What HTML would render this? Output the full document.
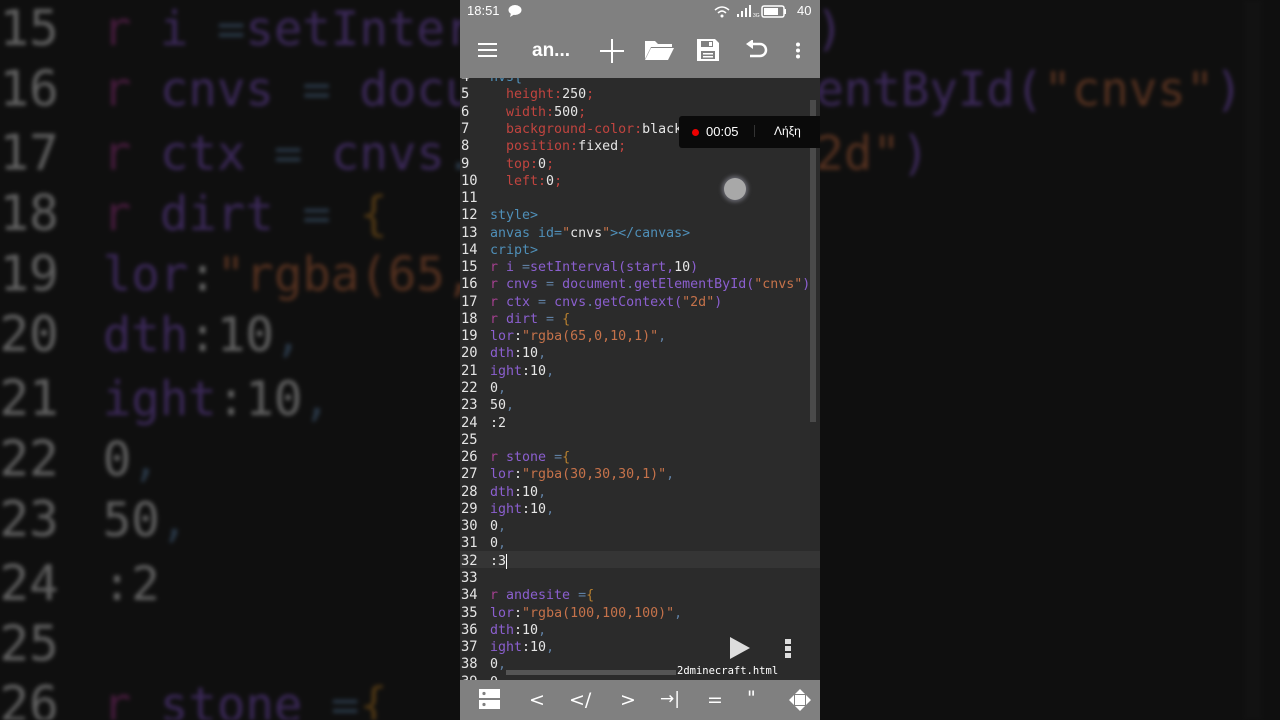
<!DOCTYPE html>
<html><head><meta charset="utf-8"><style>
*{margin:0;padding:0;box-sizing:border-box}
body{width:1280px;height:720px;overflow:hidden;background:#0f0f0f;position:relative;font-family:"Liberation Sans",sans-serif}
.code{position:absolute;left:460px;top:0;width:360px;height:720px;font-family:"DejaVu Sans Mono","Liberation Mono",monospace;font-size:13.3px;}
#fg{height:680px;overflow:hidden}
.ln{position:absolute;left:1px;height:17.27px;line-height:17.27px;white-space:pre;color:#e4e4e4;font-size:13.8px}
.ln b{font-weight:normal;position:absolute;left:29px;white-space:pre;font-size:13.3px}
.p{color:#c0443f}.n{color:#e6e6e6}.k{color:#a3408e}.i{color:#8b5fcf}.t{color:#4f8fb8}.s{color:#c5724a}.c{color:#5f7fa2}.o{color:#b8802f}
#bg{position:absolute;left:0;top:0;width:1280px;height:720px;overflow:hidden;filter:blur(2px) brightness(0.42)}
#bg .code{transform-origin:0 0;transform:translate(-464px,-920px) scale(3.56);left:460px}
.phone{position:absolute;left:460px;top:0;width:360px;height:720px;background:#2b2b2b;overflow:hidden}
</style></head><body>
<div id="bg"><div class="code" id="bgc"></div><div style="position:absolute;left:1244px;top:0;width:18px;height:720px;background:#2a2a2a"></div></div>
<div class="phone">
<div style="position:absolute;left:0;top:551px;width:360px;height:17px;background:#353535"></div>
</div>
<div class="code" id="fg"></div>
<!-- top bars -->
<div style="position:absolute;left:460px;top:0;width:360px;height:78px;background:#808080"></div>
<div style="position:absolute;left:467px;top:3px;color:#fff;font-size:13px">18:51</div>
<svg style="position:absolute;left:508px;top:4px" width="14" height="13"><ellipse cx="7" cy="6" rx="6.5" ry="5" fill="#fff"/><path d="M3 9 L2 13 L7 10Z" fill="#fff"/></svg>
<svg style="position:absolute;left:713px;top:4px" width="80" height="14">
<path d="M2 6 Q9 0 16 6" stroke="#fff" stroke-width="1.5" fill="none"/><path d="M5 9 Q9 5 13 9" stroke="#fff" stroke-width="1.5" fill="none"/><circle cx="9" cy="12" r="1.5" fill="#fff"/>
<rect x="24" y="10" width="2" height="3" fill="#fff"/><rect x="28" y="7" width="2" height="6" fill="#fff"/><rect x="32" y="4" width="2" height="9" fill="#fff"/><rect x="36" y="1" width="2" height="12" fill="#fff"/>
<text x="40" y="13" font-size="5" fill="#fff">3G</text>
<rect x="49" y="2" width="22" height="11" rx="2" stroke="#fff" stroke-width="1.5" fill="none"/><rect x="51" y="4" width="14" height="7" fill="#fff"/><rect x="71" y="5" width="2" height="5" fill="#fff"/>
</svg>
<div style="position:absolute;left:797px;top:3px;color:#fff;font-size:13px">40</div>
<svg style="position:absolute;left:478px;top:42px" width="20" height="16"><rect y="1" width="19" height="2" fill="#fff"/><rect y="7" width="19" height="2" fill="#fff"/><rect y="13" width="19" height="2" fill="#fff"/></svg>
<div style="position:absolute;left:532px;top:40px;color:#fff;font-size:19px;font-weight:bold">an...</div>
<svg style="position:absolute;left:599px;top:38px" width="26" height="26"><path d="M13 1V25M1 13H25" stroke="#fff" stroke-width="2"/></svg>
<svg style="position:absolute;left:645px;top:39px" width="30" height="22"><path d="M0 2H10L13 5H27V8H6L0 20Z" fill="#fff"/><path d="M6 9H29L23 21H0Z" fill="#fff"/></svg>
<svg style="position:absolute;left:696px;top:38px" width="24" height="24"><path d="M1 1H19L23 5V23H1Z" fill="#fff"/><rect x="5" y="3" width="12" height="6" fill="#808080"/><rect x="13" y="4" width="3" height="4" fill="#fff"/><rect x="5" y="13" width="14" height="8" fill="#808080"/><rect x="7" y="15" width="10" height="1.5" fill="#fff"/><rect x="7" y="18" width="10" height="1.5" fill="#fff"/></svg>
<svg style="position:absolute;left:745px;top:40px" width="24" height="22"><path d="M7 4H15A6 6 0 0 1 15 16H5" stroke="#fff" stroke-width="2.5" fill="none"/><path d="M1 4L8 -1V9Z" fill="#fff"/></svg>
<svg style="position:absolute;left:794px;top:42px" width="8" height="18"><circle cx="4" cy="2.5" r="2" fill="#fff"/><circle cx="4" cy="8.5" r="2" fill="#fff"/><circle cx="4" cy="14.5" r="2" fill="#fff"/></svg>
<!-- scrollbars -->
<div style="position:absolute;left:810px;top:100px;width:6px;height:322px;background:#4a4a4a"></div>
<div style="position:absolute;left:506px;top:670px;width:170px;height:5px;background:#555"></div>
<!-- recording overlay -->
<div style="position:absolute;left:679px;top:116px;width:141px;height:32px;background:#0a0a0a;border-radius:3px 0 0 3px"></div>
<div style="position:absolute;left:692px;top:129px;width:7px;height:7px;border-radius:50%;background:#e00"></div>
<div style="position:absolute;left:706px;top:124px;color:#fff;font-size:13px">00:05</div>
<div style="position:absolute;left:754px;top:125px;width:1px;height:12px;background:#333"></div>
<div style="position:absolute;left:774px;top:124px;color:#fff;font-size:12px">Λήξη</div>
<div style="position:absolute;left:724px;top:178px;width:22px;height:22px;border-radius:50%;background:#a8a8a8;box-shadow:0 0 4px 2px rgba(200,200,220,.4)"></div>
<!-- play etc -->
<svg style="position:absolute;left:730px;top:637px" width="20" height="22"><path d="M0 0L20 11L0 22Z" fill="#ddd"/></svg>
<svg style="position:absolute;left:784px;top:638px" width="10" height="22"><rect x="1" y="1" width="6" height="5" fill="#ddd"/><rect x="1" y="8" width="6" height="5" fill="#ddd"/><rect x="1" y="15" width="6" height="5" fill="#ddd"/></svg>
<div style="position:absolute;left:677px;top:665px;color:#fff;font-family:'DejaVu Sans Mono',monospace;font-size:10.5px">2dminecraft.html</div>
<!-- bottom bar -->
<div style="position:absolute;left:460px;top:680px;width:360px;height:40px;background:#808080"></div>
<svg style="position:absolute;left:479px;top:689px" width="22" height="22"><rect y="0" width="21" height="9" fill="#fff"/><rect y="11" width="21" height="9" fill="#fff"/><circle cx="5" cy="4.5" r="1.6" fill="#808080"/><circle cx="5" cy="15.5" r="1.6" fill="#808080"/></svg>
<div style="position:absolute;top:689px;left:0;width:1280px;height:25px;color:#fff;font-size:19px;font-family:'DejaVu Sans',sans-serif">
<span style="position:absolute;left:529px">&lt;</span><span style="position:absolute;left:569px">&lt;/</span><span style="position:absolute;left:620px">&gt;</span><span style="position:absolute;left:660px;font-size:17px">→|</span><span style="position:absolute;left:707px">=</span><span style="position:absolute;left:747px;top:-2px">"</span></div>
<svg style="position:absolute;left:789px;top:689px" width="22" height="22"><path d="M11 0L16 5H6Z M11 22L16 17H6Z M0 11L5 6V16Z M22 11L17 6V16Z" fill="#fff"/><rect x="6" y="6" width="10" height="10" fill="#fff"/></svg>
<script>
const L={
4:'<b class="t">nvs{</b>',
5:'<b>  <span class="p">height:</span><span class="n">250</span><span class="p">;</span></b>',
6:'<b>  <span class="p">width:</span><span class="n">500</span><span class="p">;</span></b>',
7:'<b>  <span class="p">background-color:</span><span class="n">black;</span></b>',
8:'<b>  <span class="p">position:</span><span class="n">fixed</span><span class="p">;</span></b>',
9:'<b>  <span class="p">top:</span><span class="n">0</span><span class="p">;</span></b>',
10:'<b>  <span class="p">left:</span><span class="n">0</span><span class="p">;</span></b>',
11:'',
12:'<b class="t">style&gt;</b>',
13:'<b><span class="t">anvas id=</span><span class="s">"</span><span class="n">cnvs</span><span class="s">"</span><span class="t">&gt;&lt;/canvas&gt;</span></b>',
14:'<b class="t">cript&gt;</b>',
15:'<b><span class="k">r </span><span class="i">i </span><span class="c">=</span><span class="i">setInterval(start,</span><span class="n">10</span><span class="i">)</span></b>',
16:'<b><span class="k">r </span><span class="i">cnvs </span><span class="c">= </span><span class="i">document</span><span class="c">.</span><span class="i">getElementById(</span><span class="s">"cnvs"</span><span class="i">)</span></b>',
17:'<b><span class="k">r </span><span class="i">ctx </span><span class="c">= </span><span class="i">cnvs</span><span class="c">.</span><span class="i">getContext(</span><span class="s">"2d"</span><span class="i">)</span></b>',
18:'<b><span class="k">r </span><span class="i">dirt </span><span class="c">= </span><span class="o">{</span></b>',
19:'<b><span class="i">lor</span><span class="n">:</span><span class="s">"rgba(65,0,10,1)"</span><span class="c">,</span></b>',
20:'<b><span class="i">dth</span><span class="n">:10</span><span class="c">,</span></b>',
21:'<b><span class="i">ight</span><span class="n">:10</span><span class="c">,</span></b>',
22:'<b><span class="n">0</span><span class="c">,</span></b>',
23:'<b><span class="n">50</span><span class="c">,</span></b>',
24:'<b><span class="n">:2</span></b>',
25:'',
26:'<b><span class="k">r </span><span class="i">stone </span><span class="c">=</span><span class="o">{</span></b>',
27:'<b><span class="i">lor</span><span class="n">:</span><span class="s">"rgba(30,30,30,1)"</span><span class="c">,</span></b>',
28:'<b><span class="i">dth</span><span class="n">:10</span><span class="c">,</span></b>',
29:'<b><span class="i">ight</span><span class="n">:10</span><span class="c">,</span></b>',
30:'<b><span class="n">0</span><span class="c">,</span></b>',
31:'<b><span class="n">0</span><span class="c">,</span></b>',
32:'<b><span class="n">:3</span><span style="border-left:1px solid #fff"></span></b>',
33:'',
34:'<b><span class="k">r </span><span class="i">andesite </span><span class="c">=</span><span class="o">{</span></b>',
35:'<b><span class="i">lor</span><span class="n">:</span><span class="s">"rgba(100,100,100)"</span><span class="c">,</span></b>',
36:'<b><span class="i">dth</span><span class="n">:10</span><span class="c">,</span></b>',
37:'<b><span class="i">ight</span><span class="n">:10</span><span class="c">,</span></b>',
38:'<b><span class="n">0</span><span class="c">,</span></b>',
39:'<b><span class="n">0</span></b>'};
let h='';for(let n=4;n<=39;n++){const y=95+(n-5)*17.27-8.6;h+='<div class="ln" style="top:'+y.toFixed(1)+'px">'+n+(L[n]||'')+'</div>';}
document.getElementById('fg').innerHTML=h;document.getElementById('bgc').innerHTML=h;
</script>
</body></html>
